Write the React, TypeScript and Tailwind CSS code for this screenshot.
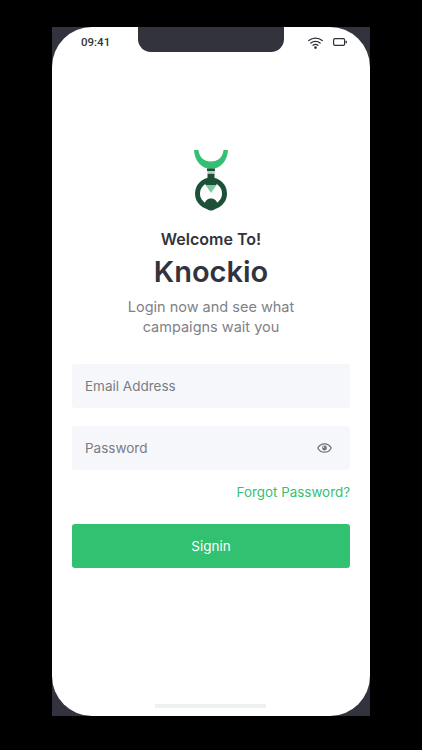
import React from "react";

const font = { fontFamily: '"Inter", "Liberation Sans", sans-serif' };

const Logo = () => (
  <svg width="36" height="62" viewBox="0 0 36 62" fill="none">
    <path d="M1 0H5.5C6 7 11 11.5 18 11.5C25 11.5 30 7 30.5 0H35C34.5 10.5 27.5 19 18 19C8.5 19 1.5 10.5 1 0Z" fill="#34bf74" />
    <path d="M14 18.5H22V21H14ZM14.5 23.5H21.5V28H14.5Z" fill="#1d5137" />
    <path d="M14.5 21H21.5V23.5H14.5Z" fill="#b9cabf" />
    <circle cx="18" cy="43.5" r="13.5" stroke="#1d5137" strokeWidth="5" />
    <path d="M12.5 31H23.5V35H12.5Z" fill="#1d5137" />
    <path d="M12.5 35H23.5L18 43Z" fill="#7ccb9f" />
    <path d="M11.5 54C12.5 50 15 48.5 18 48.5C21 48.5 23.5 50 24.5 54C24 58 21.5 60.5 18 60.5C14.5 60.5 12 58 11.5 54Z" fill="#1d5137" />
  </svg>
);

const Wifi = () => (
  <svg width="15" height="12" viewBox="0 0 15 12" fill="none" stroke="#2e2f37" strokeWidth="1.3" strokeLinecap="round">
    <path d="M0.8 3.6C4.6 0.2 10.4 0.2 14.2 3.6" />
    <path d="M2.9 6C5.5 3.8 9.5 3.8 12.1 6" />
    <path d="M5 8.3C6.5 7.2 8.5 7.2 10 8.3" />
    <circle cx="7.5" cy="10.6" r="0.7" fill="#2e2f37" />
  </svg>
);

const Battery = () => (
  <svg width="14" height="8" viewBox="0 0 14 8" fill="none">
    <rect x="0.6" y="0.6" width="11" height="6.8" rx="1.4" stroke="#2e2f37" strokeWidth="1.2" />
    <rect x="12.6" y="2.7" width="1.3" height="2.6" rx="0.5" fill="#2e2f37" />
  </svg>
);

const Eye = () => (
  <svg width="15" height="10" viewBox="0 0 15 10" fill="none">
    <path d="M0.8 5C2.2 2.2 4.6 0.8 7.5 0.8C10.4 0.8 12.8 2.2 14.2 5C12.8 7.8 10.4 9.2 7.5 9.2C4.6 9.2 2.2 7.8 0.8 5Z" stroke="#6d7078" strokeWidth="1.2" />
    <circle cx="7.5" cy="5" r="2.4" fill="#6d7078" />
    <circle cx="6.7" cy="4.2" r="0.7" fill="#f6f7fb" />
  </svg>
);

export default function App() {
  return (
    <div className="w-[422px] h-[750px] bg-black pt-[27px] px-[52px]" style={font}>
      <div className="h-[689px] bg-[#32333c]">
        <div className="relative h-full bg-white rounded-[40px] flex flex-col items-center overflow-hidden">
          <div className="w-full h-[25px] flex">
            <span
              className="w-[86px] shrink-0 pl-[29px] pt-[8px] text-[11.5px] leading-[14px] font-medium text-[#33343c]"
              style={{ fontFamily: "Roboto, sans-serif" }}
            >
              09:41
            </span>
            <div className="w-[146px] h-[25px] bg-[#32333c] rounded-b-[13px]" />
            <div className="flex-1 flex justify-end items-start gap-[10px] pr-[23px] pt-[10px]">
              <Wifi />
              <div className="pt-[1px]"><Battery /></div>
            </div>
          </div>

          <div className="mt-[98px]"><Logo /></div>

          <h2 className="mt-[17px] text-[16px] leading-[20px] font-semibold text-[#32333c]">Welcome To!</h2>
          <h1 className="mt-[5px] text-[29px] leading-[36px] font-semibold text-[#32333c]">Knockio</h1>
          <p className="mt-[7px] text-[14.5px] leading-[20px] text-center text-[#7f8188]">
            Login now and see what<br />campaigns wait you
          </p>

          <div className="mt-[27px] w-[278px] h-[44px] rounded-[3px] bg-[#f6f7fb] px-[13px] flex items-center text-[13.5px] text-[#7a7c83]">
            Email Address
          </div>
          <div className="mt-[18px] w-[278px] h-[44px] rounded-[3px] bg-[#f6f7fb] pl-[13px] pr-[18px] flex items-center justify-between text-[13.5px] text-[#7a7c83]">
            Password
            <Eye />
          </div>

          <div className="mt-[13px] w-[278px] text-right text-[13.4px] leading-[18px] text-[#34bf74]">Forgot Password?</div>

          <button className="mt-[23px] w-[278px] h-[44px] rounded-[3px] bg-[#32c170] text-[13.5px] text-white">Signin</button>

          <div className="absolute bottom-[8px] left-[103px] w-[111px] h-[4px] bg-[#eef1f2]" />
        </div>
      </div>
    </div>
  );
}
